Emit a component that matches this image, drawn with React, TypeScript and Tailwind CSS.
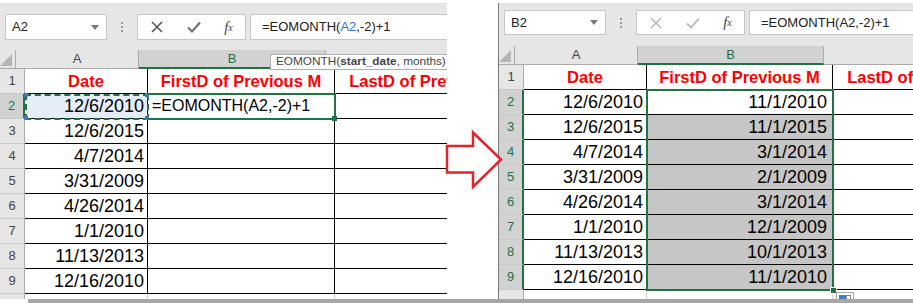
import React from "react";

const SANS = "font-['Liberation_Sans',Arial,sans-serif]";

const LEFT_DATES = ["12/6/2010", "12/6/2015", "4/7/2014", "3/31/2009", "4/26/2014", "1/1/2010", "11/13/2013", "12/16/2010"];
const RIGHT_RESULTS = ["11/1/2010", "11/1/2015", "3/1/2014", "2/1/2009", "3/1/2014", "12/1/2009", "10/1/2013", "11/1/2010"];

function CrossIcon({ color }: { color: string }) {
  return (
    <svg width="12" height="12" viewBox="0 0 12 12">
      <path d="M1 1L11 11M11 1L1 11" stroke={color} strokeWidth="1.6" fill="none" />
    </svg>
  );
}

function CheckIcon({ color }: { color: string }) {
  return (
    <svg width="14" height="12" viewBox="0 0 14 12">
      <path d="M1 6.5L5 10.5L13 1.5" stroke={color} strokeWidth="2" fill="none" />
    </svg>
  );
}

function Toolbar({ cell, editing, boxH }: { cell: string; editing: boolean; boxH: string }) {
  return (
    <div className={`flex ${boxH} items-stretch ${SANS} text-[13px] text-[#222]`}>
      <div className="ml-[5px] flex w-[102px] items-center justify-between border border-[#c6c6c6] bg-white pl-[6px] pr-[7px]">
        <span>{cell}</span>
        <svg width="8" height="5" viewBox="0 0 8 5">
          <path d="M0 0H8L4 5Z" fill="#7a7a7a" />
        </svg>
      </div>
      <div className="flex w-[30px] flex-col items-center justify-center gap-[2px]">
        <span className="h-[2px] w-[2px] bg-[#9a9a9a]" />
        <span className="h-[2px] w-[2px] bg-[#9a9a9a]" />
        <span className="h-[2px] w-[2px] bg-[#9a9a9a]" />
      </div>
      <div className="flex w-[109px] items-center border border-[#c6c6c6] bg-white">
        <div className="flex w-[38px] justify-center">
          <CrossIcon color={editing ? "#555" : "#b8b8b8"} />
        </div>
        <div className="flex w-[36px] justify-center">
          <CheckIcon color={editing ? "#6e6e6e" : "#c0c0c0"} />
        </div>
        <div className="flex flex-1 justify-center font-['Liberation_Serif',serif] text-[15px] italic text-[#444]">
          f<span className="mt-[4px] text-[10px]">x</span>
        </div>
      </div>
      <div className="ml-[4px] flex flex-1 items-center border border-r-0 border-[#c6c6c6] bg-white pl-[11px]">
        =EOMONTH(<span className={editing ? "text-[#3c6fd1]" : ""}>A2</span>,-2)+1
      </div>
    </div>
  );
}

function Corner({ w }: { w: string }) {
  return (
    <div className={`flex ${w} items-end justify-end border-r border-b border-[#ababab] bg-[#e6e6e6] pb-[2px] pr-[3px]`}>
      <svg width="12" height="12" viewBox="0 0 12 12">
        <path d="M12 0V12H0Z" fill="#b5b5b5" />
      </svg>
    </div>
  );
}

function ColHeader({ label, w, selected }: { label: string; w: string; selected?: boolean }) {
  return (
    <div
      className={`flex ${w} shrink-0 items-center justify-center border-r border-[#ababab] ${
        selected ? "border-b-2 border-b-[#217346] bg-[#d2d2d2] text-[#217346]" : "border-b border-b-[#ababab] bg-[#e6e6e6] text-[#444]"
      } text-[13px]`}
    >
      {label}
    </div>
  );
}

function RowHeader({ n, w, selected }: { n: number | string; w: string; selected?: boolean }) {
  return (
    <div
      className={`flex ${w} shrink-0 items-center justify-center border-b border-[#c9c9c9] text-[13px] ${
        selected ? "border-r-2 border-r-[#217346] bg-[#d2d2d2] text-[#217346]" : "border-r border-r-[#ababab] bg-[#e6e6e6] text-[#444]"
      }`}
    >
      {n}
    </div>
  );
}

function HeaderCells({ bW }: { bW: string }) {
  return (
    <>
      <div className="flex w-[123px] shrink-0 items-center justify-center border-r border-b border-black text-[16.5px] font-bold text-[#ff0000]">
        Date
      </div>
      <div className={`flex ${bW} shrink-0 items-center justify-center border-r border-b border-black text-[16.5px] font-bold text-[#ff0000]`}>
        FirstD of Previous M
      </div>
      <div className="flex w-[187px] shrink-0 items-center justify-center whitespace-nowrap border-b border-black text-[16.5px] font-bold text-[#ff0000]">
        LastD of Previous M
      </div>
    </>
  );
}

function LeftSheet() {
  return (
    <div className={`relative mt-[3px] flex h-[296px] w-[447px] shrink-0 flex-col overflow-hidden bg-[#e6e6e6] pt-[11px] ${SANS}`}>
      <Toolbar cell="A2" editing boxH="h-[26px]" />
      <div className="relative mt-[10px] flex flex-1 flex-col bg-white text-black">
        <div className="flex h-[19px]">
          <Corner w="w-[25px]" />
          <ColHeader label="A" w="w-[123px]" />
          <ColHeader label="B" w="w-[187px]" selected />
          <ColHeader label="" w="w-[187px]" />
        </div>
        <div className="flex h-[25px]">
          <RowHeader n={1} w="w-[25px]" />
          <HeaderCells bW="w-[187px]" />
        </div>
        {LEFT_DATES.map((d, i) => (
          <div key={i} className="flex h-[25px]">
            <RowHeader n={i + 2} w="w-[25px]" selected={i === 0} />
            <div
              className={`flex w-[123px] shrink-0 items-center justify-end border-r border-b border-black pr-[3px] text-[18px] ${
                i === 0 ? "bg-[#e4edf8]" : ""
              }`}
            >
              {d}
            </div>
            <div className="flex w-[187px] shrink-0 items-center whitespace-nowrap border-r border-b border-black pl-[4px] text-[16px]">
              {i === 0 ? "=EOMONTH(A2,-2)+1" : ""}
            </div>
            <div className="w-[187px] shrink-0 border-b border-black" />
          </div>
        ))}
        <div className="flex flex-1">
          <div className="w-[25px] border-r border-[#ababab] bg-[#e6e6e6]" />
          <div className="w-[123px] border-r border-[#d4d4d4]" />
          <div className="w-[187px] border-r border-[#d4d4d4]" />
        </div>

        {/* copy/reference marquee around A2 */}
        <div className="absolute left-[25px] top-[44px] h-[26px] w-[124px] border-2 border-dashed border-[#217346]" />
        <span className="absolute left-[24px] top-[43px] h-[4px] w-[4px] bg-[#4472c4]" />
        <span className="absolute left-[145px] top-[43px] h-[4px] w-[4px] bg-[#4472c4]" />
        <span className="absolute left-[24px] top-[66px] h-[4px] w-[4px] bg-[#4472c4]" />
        <span className="absolute left-[145px] top-[66px] h-[4px] w-[4px] bg-[#4472c4]" />
        {/* editing cell B2 */}
        <div className="absolute left-[148px] top-[43px] h-[27px] w-[188px] border-2 border-l-0 border-[#217346]" />
        <span className="absolute left-[332px] top-[66px] h-[5px] w-[5px] bg-[#217346]" />

        {/* function tooltip */}
        <div className="absolute left-[270px] top-[4px] flex h-[16px] items-center whitespace-nowrap border border-[#b0b0b0] bg-white pl-[5px] pr-[3px] text-[11.8px] text-[#444]">
          EOMONTH(<span className="font-bold">start_date</span>, months)
        </div>
      </div>
    </div>
  );
}

function RightSheet() {
  return (
    <div className={`relative mt-[3px] flex h-[296px] flex-1 flex-col overflow-hidden border-l border-[#7a7a7a] bg-[#e6e6e6] pt-[7px] ${SANS}`}>
      <Toolbar cell="B2" editing={false} boxH="h-[25px]" />
      <div className="relative mt-[11px] flex flex-1 flex-col bg-white text-black">
        <div className="flex h-[19px]">
          <Corner w="w-[25px]" />
          <ColHeader label="A" w="w-[123px]" />
          <ColHeader label="B" w="w-[186px]" selected />
          <ColHeader label="" w="w-[187px]" />
        </div>
        <div className="flex h-[25px]">
          <RowHeader n={1} w="w-[25px]" />
          <HeaderCells bW="w-[186px]" />
        </div>
        {LEFT_DATES.map((d, i) => (
          <div key={i} className="flex h-[25px]">
            <RowHeader n={i + 2} w="w-[25px]" selected />
            <div className="flex w-[123px] shrink-0 items-center justify-end border-r border-b border-black pr-[3px] text-[18px]">
              {d}
            </div>
            <div
              className={`flex w-[186px] shrink-0 items-center justify-end border-r border-b border-black pr-[5px] text-[18px] ${
                i === 0 ? "" : "bg-[#c6c6c6]"
              }`}
            >
              {RIGHT_RESULTS[i]}
            </div>
            <div className="w-[187px] shrink-0 border-b border-black" />
          </div>
        ))}
        <div className="flex flex-1">
          <div className="w-[25px] border-r border-[#ababab] bg-[#e6e6e6]" />
          <div className="w-[123px] border-r border-[#d4d4d4]" />
          <div className="w-[186px] border-r border-[#d4d4d4]" />
        </div>

        {/* selection B2:B9 */}
        <div className="absolute left-[147px] top-[43px] h-[202px] w-[188px] border-2 border-[#217346]" />
        <span className="absolute left-[331px] top-[241px] h-[7px] w-[7px] border border-white bg-[#217346]" />
        {/* auto fill options */}
        <div className="absolute left-[337px] top-[246px] flex h-[12px] w-[18px] items-center border border-[#a8a8a8] bg-white px-[2px]">
          <span className="h-[6px] w-[7px] bg-[#3b7ddd]" />
          <span className="h-[6px] w-[5px] border border-[#8a8a8a]" />
        </div>
      </div>
    </div>
  );
}

function BigArrow() {
  return (
    <div className="relative z-10 flex w-[51px] shrink-0 items-start">
      <svg width="58" height="60" viewBox="0 0 58 60" className="mt-[131px] -ml-[1px] overflow-visible">
        <path
          d="M1 15H27V1.5L55 28.5L27 56V41.5H1Z"
          fill="white"
          stroke="#e5232b"
          strokeWidth="2.5"
          strokeLinejoin="miter"
        />
      </svg>
    </div>
  );
}

export default function App() {
  return (
    <div className="flex h-[303px] w-[913px] flex-col overflow-hidden bg-white">
      <div className="flex h-[299px]">
        <LeftSheet />
        <BigArrow />
        <RightSheet />
      </div>
      <div className="ml-[28px] h-[4px] bg-[#a6a6a6]" />
    </div>
  );
}
